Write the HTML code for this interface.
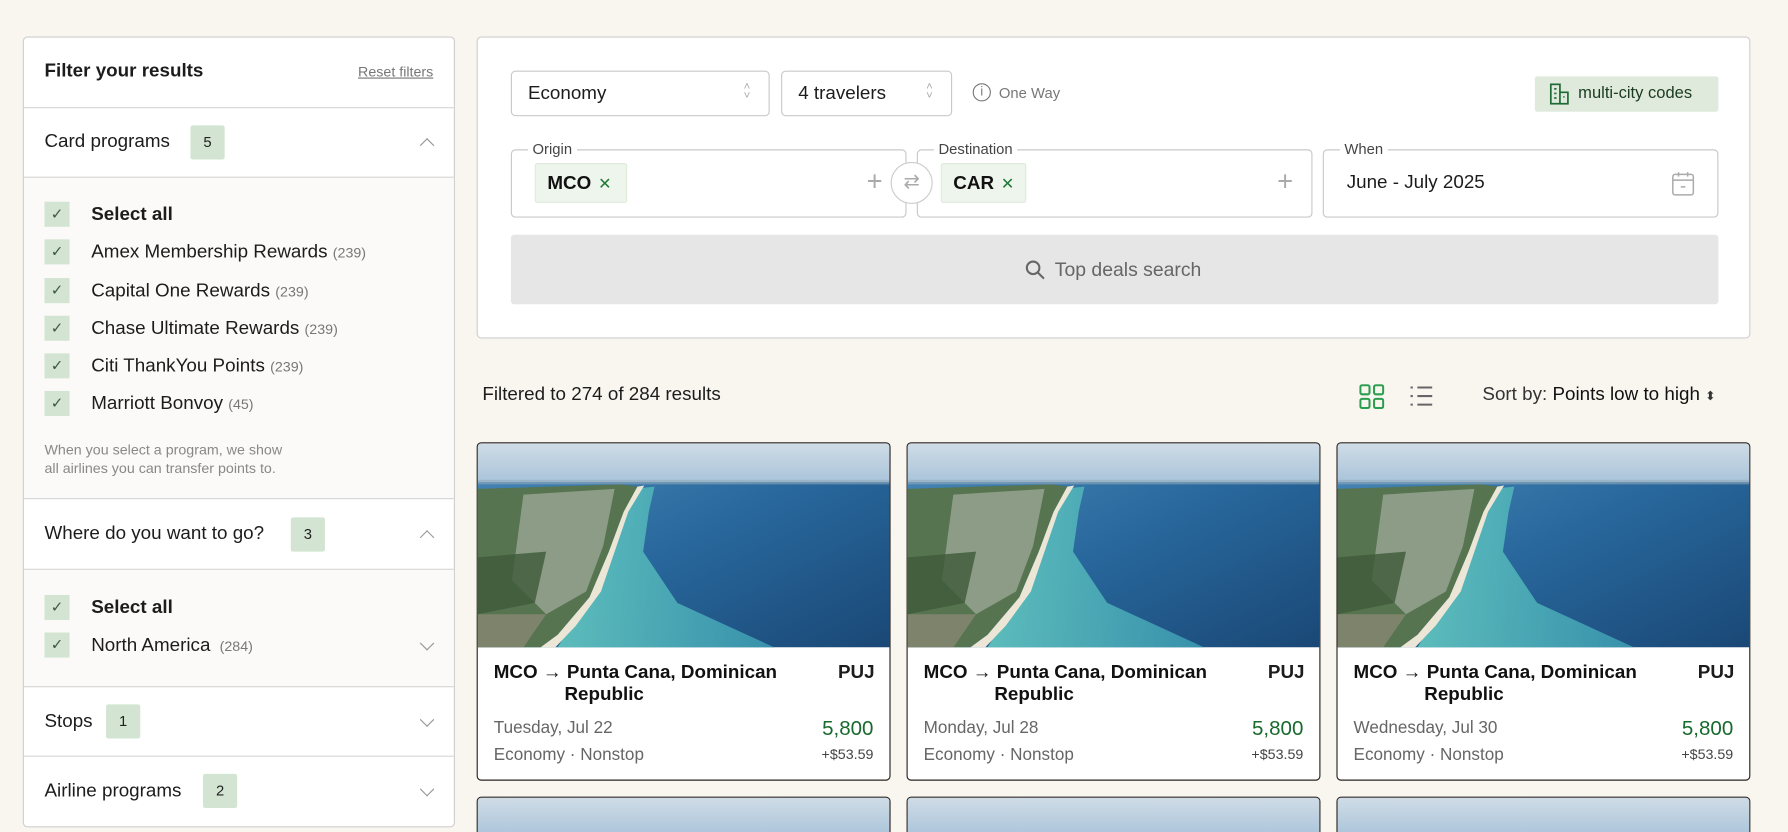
<!DOCTYPE html>
<html><head><meta charset="utf-8"><style>
*{box-sizing:border-box;margin:0;padding:0}
html,body{width:1788px;height:832px;overflow:hidden;background:#f9f6ef}
#w{width:1568px;height:730px;overflow:hidden;transform:scale(1.1403,1.1397);transform-origin:0 0;position:relative;font-family:"Liberation Sans",sans-serif;color:#1c1c1c}
.a{position:absolute}
.panel{background:#fff;border:1px solid #cfcfcf;border-radius:4px}
.hl{position:absolute;left:0;right:0;height:1px;background:#d6d6d6}
.badge{position:absolute;background:#d3e5d2;border-radius:2px;font-size:13px;text-align:center;line-height:30px;width:30px;height:30px;color:#222}
.cb{position:absolute;width:22px;height:22px;background:#d3e5d2;color:#3d5a3d;font-size:13px;text-align:center;line-height:22px}
.lbl{position:absolute;font-size:16.5px;color:#1c1c1c}
.lbl small{font-size:12.5px;color:#777}
.chev{position:absolute;width:9px;height:9px;border-left:1.3px solid #999;border-top:1.3px solid #999}
.up{transform:rotate(45deg)}.dn{transform:rotate(225deg)}
.box{position:absolute;border:1px solid #c9c9c9;border-radius:4px;background:#fff}
.flab{position:absolute;top:-9px;background:#fff;padding:0 4px;font-size:13px;color:#444}
.tag{position:absolute;background:#eef5ec;border:1px solid #e0ebdd;border-radius:2px;height:35px;font-size:16.5px;line-height:34px;padding-left:10px;font-weight:bold;color:#111}
.tag span{color:#1f7a38;font-weight:normal;margin-left:6px;font-size:14px}
.card{position:absolute;width:363px;height:297px;border:1px solid #2a2320;border-radius:4px;background:#fff;overflow:hidden}
.card svg{display:block}
.t1{position:absolute;left:14px;top:192px;font-size:16.5px;line-height:19px;font-weight:bold;color:#111}
.puj{position:absolute;right:13px;top:192px;font-size:16.5px;font-weight:bold}
.dt{position:absolute;left:14px;top:241px;font-size:15px;color:#666}
.ec{position:absolute;left:14px;top:265px;font-size:15px;color:#666}
.pts{position:absolute;right:14px;top:240px;font-size:18px;color:#17692c}
.usd{position:absolute;right:14px;top:266px;font-size:12.5px;color:#444}
</style></head><body><div id="w">
<svg width="0" height="0" style="position:absolute"><defs>
<linearGradient id="sky" x1="0" y1="0" x2="0" y2="1"><stop offset="0" stop-color="#cfdce6"/><stop offset="1" stop-color="#aac4da"/></linearGradient>
<linearGradient id="sea" x1="0" y1="0" x2="1" y2="1"><stop offset="0" stop-color="#4a8ab8"/><stop offset=".5" stop-color="#28679c"/><stop offset="1" stop-color="#1a4876"/></linearGradient>
<linearGradient id="tq" x1="0" y1="0" x2="1" y2="0"><stop offset="0" stop-color="#62c6bf"/><stop offset="1" stop-color="#3a98b0"/></linearGradient>
<g id="img">
<rect width="362" height="179" fill="url(#sea)"/>
<rect width="362" height="34" fill="url(#sky)"/>
<path d="M135,40 L155,38 L150,60 L145,95 L175,140 L260,179 L70,179 L100,130 L120,80Z" fill="url(#tq)" opacity=".9"/>
<path d="M0,40 L125,36 L140,38 L128,60 L115,95 L98,135 L70,168 L55,179 L0,179Z" fill="#56744f"/>
<path d="M40,45 L120,40 L110,90 L95,130 L60,150 L30,120Z" fill="#b9bdb5" opacity=".55"/>
<path d="M0,100 L60,95 L50,140 L0,150Z" fill="#3e5a3a" opacity=".8"/>
<path d="M0,150 L60,150 L40,179 L0,179Z" fill="#9a8f80" opacity=".6"/>
<path d="M140,38 L128,60 L115,95 L98,135 L70,168 L55,179 L68,179 L86,160 L108,130 L120,95 L132,60 L146,37Z" fill="#ece6d6"/>
<rect y="32" width="362" height="4" fill="#8fa9bb" opacity=".6"/>
</g></defs></svg>

<!-- left panel -->
<div class="a panel" style="left:20px;top:32px;width:379px;height:694px;overflow:hidden">
 <div class="a" style="left:0;right:0;top:122px;height:283px;background:#fbfaf8"></div>
 <div class="a" style="left:0;right:0;top:467px;height:103px;background:#fbfaf8"></div>
 <div class="a" style="left:18px;top:20px;font-size:16.5px;font-weight:bold">Filter your results</div>
 <div class="a" style="right:18px;top:23px;font-size:12.5px;color:#777;text-decoration:underline">Reset filters</div>
 <div class="hl" style="top:61px"></div>
 <div class="lbl" style="left:18px;top:82px">Card programs</div>
 <div class="badge" style="left:146px;top:77px">5</div>
 <div class="chev up" style="left:349px;top:90px"></div>
 <div class="hl" style="top:122px"></div>
 <div class="cb" style="left:18px;top:144px">✓</div><div class="lbl" style="left:59px;top:146px;font-weight:bold">Select all</div>
 <div class="cb" style="left:18px;top:177px">✓</div><div class="lbl" style="left:59px;top:179px">Amex Membership Rewards <small>(239)</small></div>
 <div class="cb" style="left:18px;top:211px">✓</div><div class="lbl" style="left:59px;top:213px">Capital One Rewards <small>(239)</small></div>
 <div class="cb" style="left:18px;top:244px">✓</div><div class="lbl" style="left:59px;top:246px">Chase Ultimate Rewards <small>(239)</small></div>
 <div class="cb" style="left:18px;top:277px">✓</div><div class="lbl" style="left:59px;top:279px">Citi ThankYou Points <small>(239)</small></div>
 <div class="cb" style="left:18px;top:310px">✓</div><div class="lbl" style="left:59px;top:312px">Marriott Bonvoy <small>(45)</small></div>
 <div class="a" style="left:18px;top:354px;font-size:12.5px;line-height:16px;color:#888">When you select a program, we show<br>all airlines you can transfer points to.</div>
 <div class="hl" style="top:404px"></div>
 <div class="lbl" style="left:18px;top:426px">Where do you want to go?</div>
 <div class="badge" style="left:234px;top:421px">3</div>
 <div class="chev up" style="left:349px;top:434px"></div>
 <div class="hl" style="top:466px"></div>
 <div class="cb" style="left:18px;top:489px">✓</div><div class="lbl" style="left:59px;top:491px;font-weight:bold">Select all</div>
 <div class="cb" style="left:18px;top:522px">✓</div><div class="lbl" style="left:59px;top:524px">North America <small>&nbsp;(284)</small></div>
 <div class="chev dn" style="left:349px;top:527px"></div>
 <div class="hl" style="top:569px"></div>
 <div class="lbl" style="left:18px;top:591px">Stops</div>
 <div class="badge" style="left:72px;top:585px">1</div>
 <div class="chev dn" style="left:349px;top:594px"></div>
 <div class="hl" style="top:630px"></div>
 <div class="lbl" style="left:18px;top:652px">Airline programs</div>
 <div class="badge" style="left:157px;top:646px">2</div>
 <div class="chev dn" style="left:349px;top:655px"></div>
</div>

<!-- search panel -->
<div class="a panel" style="left:418px;top:32px;width:1117px;height:265px">
 <div class="box" style="left:29px;top:29px;width:227px;height:40px"><div class="a" style="left:14px;top:10px;font-size:16.5px">Economy</div><div class="a" style="right:16px;top:10px;font-size:10px;color:#aaa;line-height:8px">˄<br>˅</div></div>
 <div class="box" style="left:266px;top:29px;width:150px;height:40px"><div class="a" style="left:14px;top:10px;font-size:16.5px">4 travelers</div><div class="a" style="right:16px;top:10px;font-size:10px;color:#aaa;line-height:8px">˄<br>˅</div></div>
 <div class="a" style="left:434px;top:40px;width:16px;height:16px;border:1.3px solid #777;border-radius:50%;font-size:11px;text-align:center;line-height:14px;color:#777">i</div>
 <div class="a" style="left:457px;top:41px;font-size:13px;color:#777">One Way</div>
 <div class="a" style="left:927px;top:34px;width:161px;height:31px;background:#dfeadd;border-radius:2px">
  <svg class="a" style="left:13px;top:6px" width="18" height="19" viewBox="0 0 18 19" fill="none" stroke="#1f6b35" stroke-width="1.5"><rect x="1" y="1" width="8" height="17"/><path d="M9 8h7v10H9M4 5h2M4 9h2M4 13h2M12 12h1"/></svg>
  <div class="a" style="left:38px;top:7px;font-size:14.5px;color:#1a3b22">multi-city codes</div>
 </div>
 <div class="box" style="left:29px;top:98px;width:347px;height:60px"><div class="flab" style="left:14px">Origin</div>
  <div class="tag" style="left:20px;top:11px;width:81px">MCO<span>✕</span></div>
  <div class="a" style="right:20px;top:14px;font-size:24px;color:#aaa;font-weight:300">+</div></div>
 <div class="box" style="left:385px;top:98px;width:347px;height:60px"><div class="flab" style="left:14px">Destination</div>
  <div class="tag" style="left:20px;top:11px;width:75px">CAR<span>✕</span></div>
  <div class="a" style="right:16px;top:14px;font-size:24px;color:#aaa">+</div></div>
 <div class="a" style="left:362px;top:109px;width:37px;height:37px;border:1px solid #ccc;border-radius:50%;background:#fff;text-align:center;line-height:34px;color:#aaa;font-size:17px;z-index:2">⇄</div>
 <div class="box" style="left:741px;top:98px;width:347px;height:60px"><div class="flab" style="left:14px">When</div>
  <div class="a" style="left:20px;top:19px;font-size:16.5px">June - July 2025</div>
  <svg class="a" style="right:20px;top:18px" width="20" height="22" viewBox="0 0 20 22" fill="none" stroke="#aaa" stroke-width="1.3"><rect x="1" y="3" width="18" height="18" rx="2"/><path d="M1 8h18M6 1v4M14 1v4M8 14h4"/></svg></div>
 <div class="a" style="left:29px;top:173px;width:1059px;height:61px;background:#e6e6e6;border-radius:3px">
  <svg class="a" style="left:451px;top:22px" width="18" height="18" viewBox="0 0 18 18" fill="none" stroke="#666" stroke-width="1.8"><circle cx="7" cy="7" r="5.5"/><path d="M11 11l5.5 5.5"/></svg>
  <div class="a" style="left:477px;top:21px;font-size:17px;color:#666">Top deals search</div></div>
</div>

<div class="a" style="left:423px;top:337px;font-size:16.5px">Filtered to 274 of 284 results</div>
<svg class="a" style="left:1192px;top:337px" width="22" height="22" viewBox="0 0 22 22" fill="none" stroke="#2a9d4e" stroke-width="1.8"><rect x="1" y="1" width="8" height="8" rx="1.5"/><rect x="13" y="1" width="8" height="8" rx="1.5"/><rect x="1" y="13" width="8" height="8" rx="1.5"/><rect x="13" y="13" width="8" height="8" rx="1.5"/></svg>
<svg class="a" style="left:1236px;top:338px" width="21" height="19" viewBox="0 0 21 19" fill="none" stroke="#666" stroke-width="1.8"><path d="M1 2h2M7 2h13M1 9.5h2M7 9.5h13M1 17h2M7 17h13"/></svg>
<div class="a" style="left:1300px;top:337px;font-size:16.5px;color:#333">Sort by: <span style="color:#111">Points low to high</span> <span style="font-size:11px">⬍</span></div>

<div class="card" style="left:418px;top:388px"><svg width="362" height="179"><use href="#img"/></svg>
 <div class="t1">MCO → Punta Cana, Dominican<br><span style="margin-left:62px">Republic</span></div><div class="puj">PUJ</div>
 <div class="dt">Tuesday, Jul 22</div><div class="pts">5,800</div><div class="ec">Economy · Nonstop</div><div class="usd">+$53.59</div></div>
<div class="card" style="left:795px;top:388px"><svg width="362" height="179"><use href="#img"/></svg>
 <div class="t1">MCO → Punta Cana, Dominican<br><span style="margin-left:62px">Republic</span></div><div class="puj">PUJ</div>
 <div class="dt">Monday, Jul 28</div><div class="pts">5,800</div><div class="ec">Economy · Nonstop</div><div class="usd">+$53.59</div></div>
<div class="card" style="left:1172px;top:388px"><svg width="362" height="179"><use href="#img"/></svg>
 <div class="t1">MCO → Punta Cana, Dominican<br><span style="margin-left:62px">Republic</span></div><div class="puj">PUJ</div>
 <div class="dt">Wednesday, Jul 30</div><div class="pts">5,800</div><div class="ec">Economy · Nonstop</div><div class="usd">+$53.59</div></div>
<div class="card" style="left:418px;top:699px"><svg width="362" height="179"><use href="#img"/></svg></div>
<div class="card" style="left:795px;top:699px"><svg width="362" height="179"><use href="#img"/></svg></div>
<div class="card" style="left:1172px;top:699px"><svg width="362" height="179"><use href="#img"/></svg></div>
</div></body></html>
